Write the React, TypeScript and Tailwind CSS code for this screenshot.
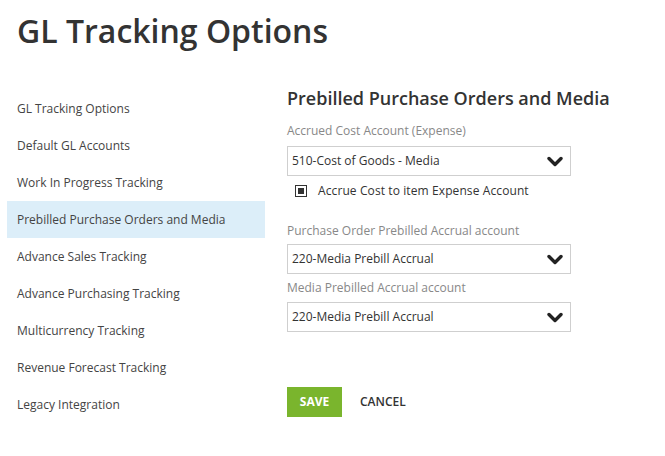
import React from "react";

const navItems = [
    "GL Tracking Options",
    "Default GL Accounts",
    "Work In Progress Tracking",
    "Prebilled Purchase Orders and Media",
    "Advance Sales Tracking",
    "Advance Purchasing Tracking",
    "Multicurrency Tracking",
    "Revenue Forecast Tracking",
    "Legacy Integration",
];

function Chevron() {
    return (
        <svg width="16" height="11" viewBox="0 0 16 11" className="shrink-0">
            <path d="M2 2.5 L8 8.5 L14 2.5" fill="none" stroke="#222" strokeWidth="3.4" strokeLinecap="round" strokeLinejoin="round" />
        </svg>
    );
}

function SelectBox({ value }: { value: string }) {
    return (
        <div className="h-[30px] w-[284px] border border-[#cfcfcf] flex items-center justify-between pl-[4px] pr-[7px] text-[12px] text-[#333] bg-white">
            <span>{value}</span>
            <Chevron />
        </div>
    );
}

export default function App() {
    const active = 3;
    return (
        <div className="w-[665px] h-[456px] bg-white font-['Open_Sans',sans-serif] text-[#333]">
            <h1 className="pl-[17px] pt-[12px] text-[32px] leading-[38px] font-semibold text-[#333]">GL Tracking Options</h1>

            <div className="flex mt-[36px]">
                {/* Sidebar */}
                <nav className="w-[258px] ml-[7px] mt-[4px] flex flex-col">
                    {navItems.map((item, i) => (
                        <div
                            key={item}
                            className={`h-[37px] flex items-center pl-[10px] text-[12px] text-[#444] ${i === active ? 'bg-[#dceef9]' : ''}`}
                        >
                            {item}
                        </div>
                    ))}
                </nav>

                {/* Form */}
                <div className="ml-[22px] flex flex-col">
                    <h2 className="text-[18px] leading-[24px] font-semibold text-[#333]">Prebilled Purchase Orders and Media</h2>

                    <label className="mt-[12px] text-[12px] leading-[18px] text-[#888]">Accrued Cost Account (Expense)</label>
                    <div className="mt-[6px]">
                        <SelectBox value="510-Cost of Goods - Media" />
                    </div>
                    <div className="mt-[5px] h-[20px] flex items-center pl-[8px] gap-[11px] text-[12px] text-[#333]">
                        <span className="w-[12px] h-[12px] border border-[#333] flex items-center justify-center">
                            <span className="w-[6px] h-[6px] bg-[#333]" />
                        </span>
                        <span className="tracking-[0.1px]">Accrue Cost to item Expense Account</span>
                    </div>

                    <label className="mt-[21px] text-[12px] leading-[18px] text-[#888]">Purchase Order Prebilled Accrual account</label>
                    <div className="mt-[4px]">
                        <SelectBox value="220-Media Prebill Accrual" />
                    </div>

                    <label className="mt-[5px] text-[12px] leading-[18px] text-[#888]">Media Prebilled Accrual account</label>
                    <div className="mt-[5px]">
                        <SelectBox value="220-Media Prebill Accrual" />
                    </div>

                    <div className="mt-[55px] flex items-center gap-[18px]">
                        <button className="h-[30px] w-[55px] bg-[#7ab52d] text-white text-[12px] font-bold">SAVE</button>
                        <button className="text-[12px] font-semibold text-[#333]">CANCEL</button>
                    </div>
                </div>
            </div>
        </div>
    );
}
